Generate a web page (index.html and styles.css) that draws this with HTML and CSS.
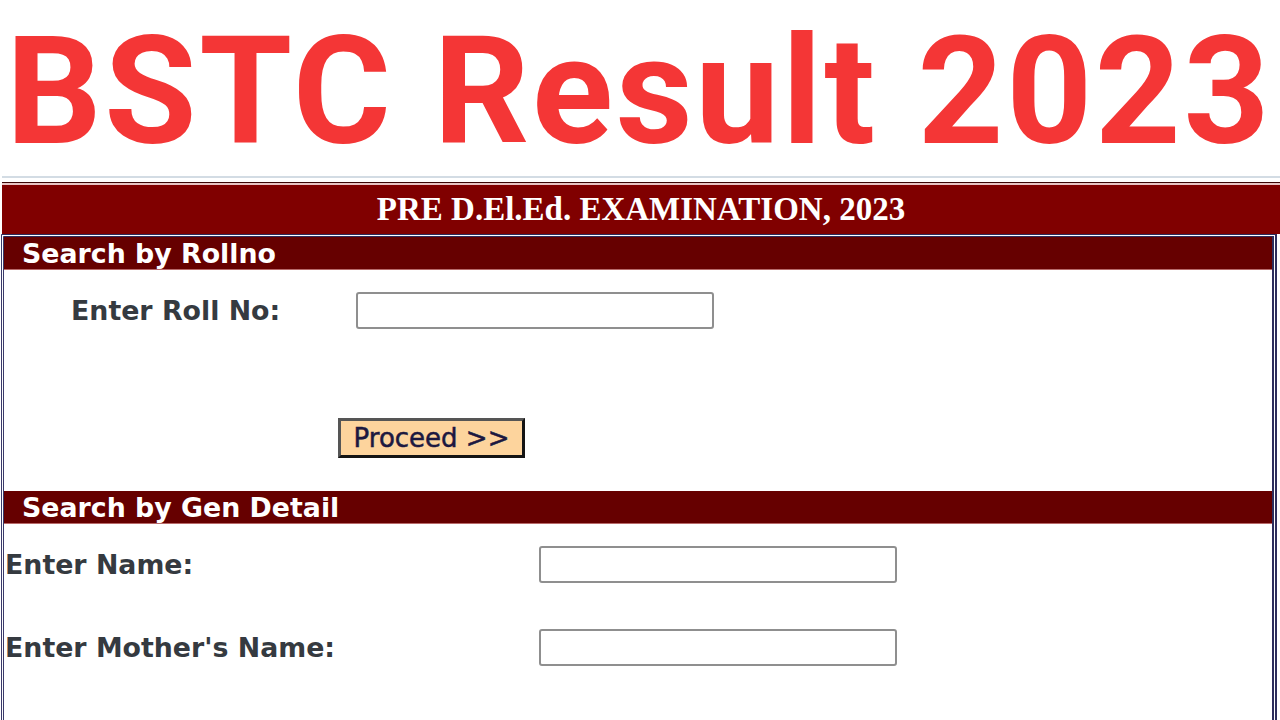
FILE: index.html
```html
<!DOCTYPE html>
<html lang="en">
  <head>
    <meta charset="UTF-8" />
    <meta name="viewport" content="width=device-width, initial-scale=1.0" />
    <title>BSTC Result 2023</title>
    <link rel="stylesheet" href="styles.css">
  </head>
  <body>
    <!-- Big thumbnail heading -->
    <h1 class="title">BSTC Result 2023</h1>
    <div class="rule"></div>

    <!-- Exam name strip -->
    <div class="exam-head">PRE D.El.Ed. EXAMINATION, 2023</div>

    <div class="panel">
      <!-- Search by roll number -->
      <div class="bar">Search by Rollno</div>
      <div class="roll-row">
        <label for="rollno">Enter Roll No:</label>
        <input type="text" id="rollno" />
      </div>
      <div class="btn-row">
        <button type="button">Proceed &gt;&gt;</button>
      </div>

      <!-- Search by general details -->
      <div class="bar">Search by Gen Detail</div>
      <div class="gen-row">
        <label for="name">Enter Name:</label>
        <input type="text" id="name" />
      </div>
      <div class="gen-row gen-row-2">
        <label for="mname">Enter Mother's Name:</label>
        <input type="text" id="mname" />
      </div>
    </div>
  </body>
</html>
```

FILE: styles.css
```css
/* Page base */
body {
  margin: 0;
  background: #ffffff;
  font-family: "DejaVu Sans", Verdana, sans-serif;
  overflow: hidden;
}

/* Big red heading */
.title {
  margin: 0;
  padding: 17px 0 0 6px;
  height: 176px;
  box-sizing: border-box;
  font-family: Roboto, "Liberation Sans", sans-serif;
  font-weight: 700;
  font-size: 150px;
  line-height: 150px;
  letter-spacing: 2.6px;
  color: #f43636;
  white-space: nowrap;
}

/* Thin grey line under the heading */
.rule {
  height: 2px;
  margin-left: 2px;
  background: #d3dce4;
}

/* Maroon exam strip */
.exam-head {
  margin: 4px 0 0 2px;
  height: 52px;
  box-sizing: border-box;
  border-top: 1px solid #3a0606;
  box-shadow: inset 0 2px 0 #e7c4c4;
  background: #800000;
  color: #ffffff;
  font-family: "Liberation Serif", "Times New Roman", serif;
  font-weight: bold;
  font-size: 33px;
  line-height: 46px;
  padding-top: 3px;
  text-align: center;
}

/* Bordered box holding the forms */
.panel {
  margin: 0 3px 0 1px;
  height: 500px;
  border-top: 3px double #2d2d5c;
  border-left: 3px double #3a3a6a;
  border-right: 5px double #2d2d5c;
}

/* Section title bars */
.bar {
  height: 33px;
  box-sizing: border-box;
  padding: 1px 0 0 18px;
  background: #660000;
  color: #ffffff;
  font-weight: bold;
  font-size: 26.8px;
  line-height: 32px;
  box-shadow: inset 0 -1px 0 #b86a6a;
}

label {
  font-weight: bold;
  font-size: 26.8px;
  color: #353a40;
}

input {
  width: 358px;
  height: 37px;
  box-sizing: border-box;
  border: 2px solid #8f8f8f;
  border-radius: 3px;
  font-size: 20px;
}

/* Roll number row */
.roll-row {
  display: grid;
  grid-template-columns: 285px 358px;
  align-items: center;
  margin-top: 22px;
  padding-left: 67px;
}

/* Proceed button */
.btn-row {
  margin: 89px 0 33px 334px;
}

button {
  width: 187px;
  height: 40px;
  padding: 0;
  text-align: center;
  background: #fdd49d;
  border: 3px solid #1c1c1c;
  border-color: #555555 #141414 #141414 #555555;
  color: #1c1840;
  font-family: "DejaVu Sans", Verdana, sans-serif;
  font-size: 26px;
  line-height: 32px;
  -webkit-text-stroke: 0.5px #1c1840;
  cursor: pointer;
}

/* General detail rows */
.gen-row {
  display: grid;
  grid-template-columns: 534px 358px;
  align-items: center;
  margin-top: 22px;
  padding-left: 1px;
}

.gen-row-2 {
  margin-top: 46px;
}
```
